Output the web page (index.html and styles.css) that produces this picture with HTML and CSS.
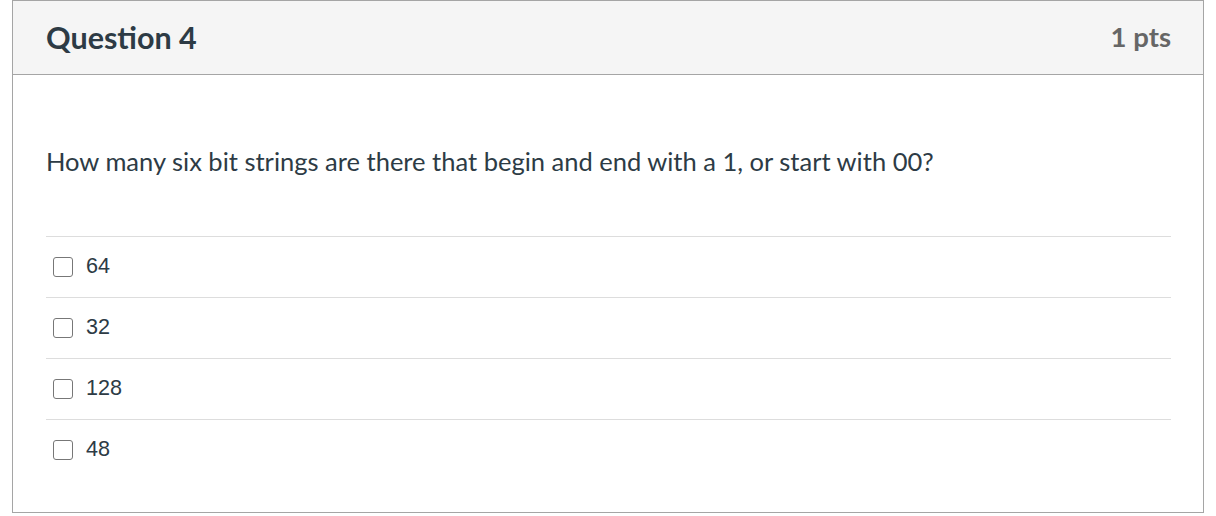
FILE: index.html
```html
<!DOCTYPE html>
<html>
<head>
<meta charset="utf-8">
<link rel="stylesheet" href="styles.css">
</head>
<body>
<div class="question">
  <div class="header">
    <h2 class="title">Question 4</h2>
    <div class="points">1 pts</div>
  </div>
  <div class="content">
    <p class="text">How many six bit strings are there that begin and end with a 1, or start with 00?</p>
    <div class="answers">
      <label class="answer"><span class="box"></span><span class="label">64</span></label>
      <label class="answer"><span class="box"></span><span class="label">32</span></label>
      <label class="answer"><span class="box"></span><span class="label">128</span></label>
      <label class="answer"><span class="box"></span><span class="label">48</span></label>
    </div>
  </div>
</div>
</body>
</html>
```

FILE: styles.css
```css
html, body { margin: 0; padding: 0; background: #fff; }
body { font-family: Lato, "Noto Sans", sans-serif; color: #2d3b45; }
.question {
  margin-left: 12px;
  width: 1190px;
  height: 511px;
  border: 1px solid #a5a5a5;
  box-sizing: content-box;
}
.header {
  height: 73px;
  background: #f5f5f5;
  border-bottom: 1px solid #a5a5a5;
  display: flex;
  align-items: center;
  justify-content: space-between;
  padding: 0 32px 2px 33px;
  box-sizing: border-box;
  height: 74px;
}
.title {
  margin: 0;
  font-size: 30.5px;
  font-weight: 700;
  color: #2d3b45;
}
.points {
  font-size: 27.5px;
  font-weight: 700;
  color: #666;
}
.content { padding: 0 32px 0 33px; }
.text {
  margin: 0;
  padding-top: 71px;
  font-size: 25.5px;
  line-height: 30px;
  height: 161px;
  box-sizing: border-box;
}
.answers { display: flex; flex-direction: column; }
.answer {
  display: flex;
  align-items: center;
  height: 61px;
  border-top: 1px solid #ddd;
  padding-left: 7px;
  box-sizing: border-box;
}
.box {
  width: 18px;
  height: 18px;
  border: 1px solid #777;
  border-radius: 3px;
  margin-right: 13px;
}
.label {
  font-family: "Liberation Sans", Arial, sans-serif;
  font-size: 21.6px;
  color: #2d3b45;
  margin-top: -2px;
}
```
